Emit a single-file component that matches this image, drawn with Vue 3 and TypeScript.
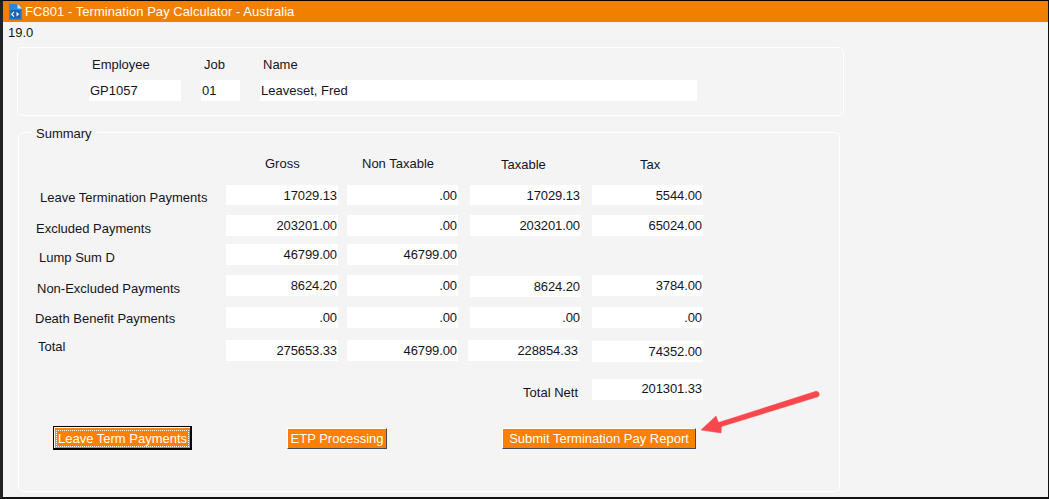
<script setup lang="ts">
interface Row { label: string; cls: string; cells: string[] }
const rows: Row[] = [
  { label: 'Leave Termination Payments', cls: 'r1', cells: ['17029.13', '.00', '17029.13', '5544.00'] },
  { label: 'Excluded Payments', cls: 'r2', cells: ['203201.00', '.00', '203201.00', '65024.00'] },
  { label: 'Lump Sum D', cls: 'r3', cells: ['46799.00', '46799.00'] },
  { label: 'Non-Excluded Payments', cls: 'r4', cells: ['8624.20', '.00', '8624.20', '3784.00'] },
  { label: 'Death Benefit Payments', cls: 'r5', cells: ['.00', '.00', '.00', '.00'] },
  { label: 'Total', cls: 'r6', cells: ['275653.33', '46799.00', '228854.33', '74352.00'] },
]
</script>

<template>
  <div class="window">
    <header class="titlebar">
      <svg class="app-icon" width="13" height="16" viewBox="0 0 13 16">
        <path d="M0 0h8.500L13 4.500V16H0z" fill="#2f86d6" />
        <path d="M8.500 0L13 4.500H8.500z" fill="#cfe4f6" />
        <rect x="1.500" y="6" width="10" height="8.500" fill="#1b62ad" />
        <path d="M5 7.800L2.800 10.200 5 12.600" fill="none" stroke="#fff" stroke-width="1.200" />
        <path d="M7.500 7.800l2.800 2.400-2.800 2.400z" fill="#fff" />
      </svg>
      <span>FC801 - Termination Pay Calculator - Australia</span>
    </header>
    <div class="version">19.0</div>

    <section class="emp-box">
      <div class="emp-grid">
        <span class="h-emp">Employee</span><span class="h-job">Job</span><span class="h-name">Name</span>
        <div class="field left">GP1057</div><div class="field left">01</div><div class="field left">Leaveset, Fred</div>
      </div>
    </section>

    <section class="summary">
      <span class="legend">Summary</span>
      <div class="heads">
        <span class="hg">Gross</span><span class="hn">Non Taxable</span><span class="ht">Taxable</span><span class="hx">Tax</span>
      </div>
      <div v-for="r in rows" :key="r.label" class="row" :class="r.cls">
        <span class="label">{{ r.label }}</span>
        <div v-for="(c, i) in r.cells" :key="i" class="field right">{{ c }}</div>
      </div>
      <div class="nett">
        <span class="nett-label">Total Nett</span>
        <div class="field right">201301.33</div>
      </div>
      <div class="actions">
        <button class="btn focus"><span>Leave Term Payments</span></button>
        <button class="btn etp">ETP Processing</button>
        <button class="btn submit">Submit Termination Pay Report</button>
      </div>
    </section>

    <svg class="arrow" width="130" height="56" viewBox="0 0 130 56">
      <path d="M4 46L19 32 21.500 38.500 119 7.300A3 3 0 0 1 121 12.700L24.500 42.500 24 49z" fill="#f9474e" stroke="#f9474e" stroke-width="0.500" stroke-linejoin="round" />
    </svg>
  </div>
</template>

<style>
html, body { margin: 0; padding: 0; background: #f4f4f4; }
</style>

<style scoped>
.window {
  position: relative;
  width: 1049px;
  height: 499px;
  box-sizing: border-box;
  background: #f4f4f4;
  border-top: 1px solid #000;
  border-left: 3px solid #222;
  border-right: 1px solid #111;
  border-bottom: 2px solid #111;
  font-family: "Liberation Sans", Arial, sans-serif;
  font-size: 13px;
  color: #14141c;
  overflow: hidden;
}
.titlebar {
  height: 21px;
  background: #f28000;
  color: #fff;
  display: flex;
  align-items: center;
  gap: 3px;
  padding-left: 6px;
  font-size: 13px;
  letter-spacing: 0.05px;
}
.app-icon { flex: none; }
.version { padding: 3px 0 0 5px; height: 15px; line-height: 16px; }
.emp-box {
  box-sizing: border-box;
  margin: 7px 0 0 14px;
  width: 827px;
  height: 69px;
  border: 1px solid #fff;
  border-radius: 5px;
  padding: 6px 0 0 71px;
}
.emp-grid {
  display: grid;
  grid-template-columns: 92px 39px 437px;
  column-gap: 20px;
  grid-template-rows: 26px 21px;
}
.emp-grid > span { line-height: 22px; }
.h-emp, .h-job, .h-name { padding-left: 3px; }
.field {
  background: #fff;
  box-sizing: border-box;
  width: 111px;
  height: 21px;
  line-height: 22px;
}
.emp-grid .field { width: auto; }
.left { padding-left: 1px; }
.right { text-align: right; padding-right: 1px; letter-spacing: -0.1px; }
.summary {
  position: relative;
  box-sizing: border-box;
  margin: 16px 0 0 15px;
  width: 822px;
  height: 360px;
  border: 1px solid #fff;
  border-radius: 5px;
}
.legend {
  position: absolute;
  left: 12px;
  top: -7px;
  padding: 0 5px;
  background: #f4f4f4;
  line-height: 16px;
}
.heads {
  display: grid;
  grid-template-columns: 207px 121px 123px 122px 111px;
  height: 52px;
  padding-top: 23px;
  box-sizing: border-box;
  line-height: 16px;
}
.heads .hg { grid-column: 2; padding-left: 39px; }
.hn { padding-left: 15px; }
.ht, .hx { padding-top: 1px; }
.ht { padding-left: 31px; }
.hx { padding-left: 48px; }
.row {
  display: grid;
  grid-template-columns: 207px 121px 123px 122px 111px;
  align-items: start;
}
.row div:nth-of-type(1) { width: 112px; }
.label { white-space: nowrap; line-height: 16px; }
.r1 { height: 30px; }
.r2 { height: 29px; }
.r3 { height: 31px; }
.r4 { height: 32px; }
.r5 { height: 33px; }
.r6 { height: 39px; }
.r1 .field { height: 20px; line-height: 21px; }
.r1 .label { margin: 5px 0 0 21px; }
.r2 .label { margin: 6px 0 0 17px; }
.r3 .label { margin: 6px 0 0 20px; }
.r4 .label { margin: 6px 0 0 18px; }
.r5 .label { margin: 4px 0 0 16px; }
.r6 .label { margin: -1px 0 0 19px; }
.r4 div:nth-of-type(3) { margin-top: 1px; }
.r6 div:nth-of-type(3) { margin-left: -2px; }
.r6 div:nth-of-type(4) { margin-top: 1px; }
.nett {
  display: flex;
  justify-content: flex-end;
  width: 684px;
  position: relative;
}
.nett .field { line-height: 20px; }
.nett-label { position: absolute; right: 125px; top: 6px; line-height: 16px; }
.actions {
  display: flex;
  align-items: center;
  margin-top: 26px;
  padding-left: 34px;
}
.btn {
  box-sizing: border-box;
  height: 21px;
  padding: 0;
  background: #ff8000;
  color: #fff;
  border: 1px solid;
  border-color: #fff #40485a #40485a #fff;
  font: 13px "Liberation Sans", Arial, sans-serif;
  white-space: nowrap;
}
.focus {
  width: 139px;
  height: 24px;
  border: solid #000;
  border-width: 1px 2px 2px 1px;
  box-shadow: inset 1px 1px 0 #fff;
  display: flex;
  align-items: center;
  justify-content: center;
  padding: 2px 1px 1px 2px;
}
.focus span {
  flex: 1;
  box-sizing: border-box;
  border: 1px dotted #fff;
  height: 17px;
  line-height: 15px;
}
.etp { width: 100px; margin-left: 95px; }
.submit { width: 194px; margin-left: 115px; }
.arrow { position: absolute; left: 694px; top: 383px; }
</style>
